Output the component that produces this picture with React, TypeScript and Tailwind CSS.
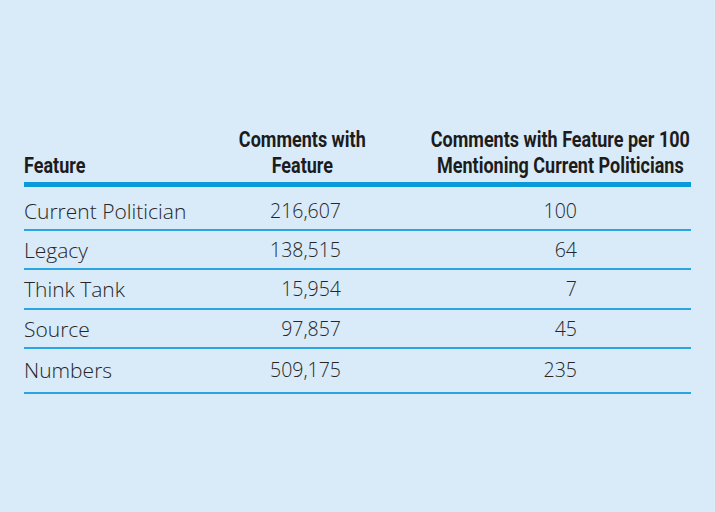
const ROWS = [
  { feature: "Current Politician", count: "216,607", per100: "100", h: "h-[44px] pt-[5px]" },
  { feature: "Legacy", count: "138,515", per100: "64", h: "h-[39px]" },
  { feature: "Think Tank", count: "15,954", per100: "7", h: "h-[40px]" },
  { feature: "Source", count: "97,857", per100: "45", h: "h-[39px]" },
  { feature: "Numbers", count: "509,175", per100: "235", h: "h-[45px] pb-[2px]" },
];

export default function App() {
  return (
    <div className="w-[715px] h-[512px] bg-[#d9eaf8] pt-[122px] pl-[24px] font-['Open_Sans',sans-serif]">
      <div className="w-[667px]">
        {/* header, condensed bold */}
        <div className="flex items-end h-[60px] pb-[4px] text-[22.5px] leading-[26px] font-bold text-[#1c1c1c] font-['Roboto',sans-serif]">
          <div className="w-[218px]">
            <span className="inline-block scale-x-[0.8] origin-left">Feature</span>
          </div>
          <div className="w-[128px] flex justify-center">
            <span className="inline-block text-center scale-x-[0.8] whitespace-nowrap">
              Comments with
              <br />
              Feature
            </span>
          </div>
          <div className="flex-1 flex justify-end pr-[1px]">
            <span className="inline-block text-center scale-x-[0.8] origin-right whitespace-nowrap">
              Comments with Feature per 100
              <br />
              Mentioning Current Politicians
            </span>
          </div>
        </div>
        <div className="h-[5px] bg-[#0b9ad9]" />

        {/* body */}
        {ROWS.map((r) => (
          <div
            key={r.feature}
            className={`flex items-center ${r.h} border-b-2 border-[#2ba5e1] text-[#262626] text-[19.5px] font-light leading-[22px]`}
          >
            <div className="w-[218px] text-[21px]">{r.feature}</div>
            <div className="w-[128px] text-right pr-[29px]">{r.count}</div>
            <div className="flex-1 text-right pr-[114px]">{r.per100}</div>
          </div>
        ))}
      </div>
    </div>
  );
}
